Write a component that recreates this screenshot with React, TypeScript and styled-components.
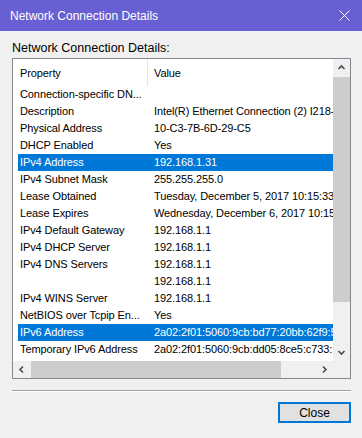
import styled, { createGlobalStyle } from "styled-components";

const GlobalStyle = createGlobalStyle`
  html, body {
    margin: 0;
    padding: 0;
    background: #f0f0f0;
  }
  * {
    box-sizing: border-box;
  }
`;

type Detail = {
  property: string;
  value: string;
  selected?: boolean;
};

const details: Detail[] = [
  { property: "Connection-specific DN...", value: "" },
  { property: "Description", value: "Intel(R) Ethernet Connection (2) I218-V" },
  { property: "Physical Address", value: "10-C3-7B-6D-29-C5" },
  { property: "DHCP Enabled", value: "Yes" },
  { property: "IPv4 Address", value: "192.168.1.31", selected: true },
  { property: "IPv4 Subnet Mask", value: "255.255.255.0" },
  { property: "Lease Obtained", value: "Tuesday, December 5, 2017 10:15:33 AM" },
  { property: "Lease Expires", value: "Wednesday, December 6, 2017 10:15:33 AM" },
  { property: "IPv4 Default Gateway", value: "192.168.1.1" },
  { property: "IPv4 DHCP Server", value: "192.168.1.1" },
  { property: "IPv4 DNS Servers", value: "192.168.1.1" },
  { property: "", value: "192.168.1.1" },
  { property: "IPv4 WINS Server", value: "192.168.1.1" },
  { property: "NetBIOS over Tcpip En...", value: "Yes" },
  { property: "IPv6 Address", value: "2a02:2f01:5060:9cb:bd77:20bb:62f9:5fc1", selected: true },
  { property: "Temporary IPv6 Address", value: "2a02:2f01:5060:9cb:dd05:8ce5:c733:1a2b" },
  { property: "Link-local IPv6 Address", value: "fe80::b477:86bb:62f9:5fc1%5" },
];

const Window = styled.div`
  width: 362px;
  height: 438px;
  display: flex;
  flex-direction: column;
  background: #f0f0f0;
  font-family: "Liberation Sans", Arial, sans-serif;
  color: #000;
  overflow: hidden;
`;

const TitleBar = styled.div`
  height: 31px;
  flex: none;
  display: flex;
  align-items: center;
  justify-content: space-between;
  padding: 0 12px 0 10px;
  background: #6860d2;
  color: #fff;
  font-size: 12px;
`;

const Body = styled.div`
  flex: 1;
  display: flex;
  flex-direction: column;
  padding: 10px 11px 0 12px;
`;

const Label = styled.div`
  font-size: 12.5px;
  line-height: 15px;
  margin-bottom: 2px;
`;

const ListView = styled.div`
  height: 321px;
  border: 1px solid #828790;
  background: #fff;
  display: grid;
  grid-template-columns: 1fr 17px;
  grid-template-rows: 1fr 17px;
`;

const Viewport = styled.div`
  overflow: hidden;
  padding-left: 5px;
  font-size: 11px;
  letter-spacing: -0.1px;
`;

const Header = styled.div`
  height: 27px;
  display: flex;
  align-items: stretch;
  white-space: nowrap;
`;

const HeaderCell = styled.div<{ $width?: number }>`
  display: flex;
  align-items: center;
  flex: none;
  width: ${(p) => (p.$width ? `${p.$width}px` : "auto")};
  padding-left: ${(p) => (p.$width ? "2px" : "6px")};
  border-right: ${(p) => (p.$width ? "1px solid #e5e5e5" : "none")};
`;

const Row = styled.div<{ $selected?: boolean }>`
  height: 17px;
  line-height: 17px;
  display: flex;
  width: 400px;
  white-space: nowrap;
  background: ${(p) => (p.$selected ? "#0078d7" : "transparent")};
  color: ${(p) => (p.$selected ? "#fff" : "#000")};
`;

const PropertyCell = styled.div`
  width: 130px;
  flex: none;
  padding-left: 2px;
  overflow: hidden;
`;

const ValueCell = styled.div`
  flex: 1;
  padding-left: 6px;
  overflow: hidden;
`;

const VScroll = styled.div`
  background: #f0f0f0;
  display: flex;
  flex-direction: column;
`;

const HScroll = styled.div`
  background: #f0f0f0;
  display: flex;
`;

const Corner = styled.div`
  background: #f0f0f0;
`;

const ArrowBox = styled.div`
  width: 17px;
  height: 17px;
  flex: none;
  display: flex;
  align-items: center;
  justify-content: center;
`;

const Track = styled.div<{ $vertical?: boolean }>`
  flex: 1;
  display: flex;
  flex-direction: ${(p) => (p.$vertical ? "column" : "row")};
  padding: ${(p) => (p.$vertical ? "1px 0 0 0" : "0 0 0 1px")};
`;

const Thumb = styled.div<{ $vertical?: boolean; $size: number }>`
  flex: none;
  background: #cdcdcd;
  ${(p) => (p.$vertical ? `height: ${p.$size}px;` : `width: ${p.$size}px;`)}
`;

const Separator = styled.div`
  margin-top: 11px;
  height: 2px;
  border-top: 1px solid #a0a0a0;
  border-bottom: 1px solid #fff;
`;

const Footer = styled.div`
  display: flex;
  justify-content: flex-end;
  margin-top: 10px;
`;

const Button = styled.button`
  width: 73px;
  height: 21px;
  padding: 0;
  border: 2px solid #0078d7;
  background: #e1e1e1;
  font-family: "Liberation Sans", Arial, sans-serif;
  font-size: 12px;
  color: #000;
`;

const Chevron = ({ dir }: { dir: "up" | "down" | "left" | "right" }) => {
  const rot = { up: 0, right: 90, down: 180, left: 270 }[dir];
  return (
    <svg width="9" height="9" viewBox="0 0 9 9">
      <polyline
        points="1.5,6 4.5,3 7.5,6"
        fill="none"
        stroke="#4a4a4a"
        strokeWidth="1.6"
        transform={`rotate(${rot} 4.5 4.5)`}
      />
    </svg>
  );
};

const CloseIcon = () => (
  <svg width="11" height="11" viewBox="0 0 11 11">
    <path d="M0.5 0.5 L10.5 10.5 M10.5 0.5 L0.5 10.5" stroke="#fff" strokeWidth="1" />
  </svg>
);

const App = () => {
  return (
    <>
      <GlobalStyle />
      <Window>
        <TitleBar>
          <span>Network Connection Details</span>
          <CloseIcon />
        </TitleBar>
        <Body>
          <Label>Network Connection Details:</Label>
          <ListView>
            <Viewport>
              <Header>
                <HeaderCell $width={130}>Property</HeaderCell>
                <HeaderCell>Value</HeaderCell>
              </Header>
              {details.map((d, i) => (
                <Row key={i} $selected={d.selected}>
                  <PropertyCell>{d.property}</PropertyCell>
                  <ValueCell>{d.value}</ValueCell>
                </Row>
              ))}
            </Viewport>
            <VScroll>
              <ArrowBox>
                <Chevron dir="up" />
              </ArrowBox>
              <Track $vertical>
                <Thumb $vertical $size={225} />
              </Track>
              <ArrowBox>
                <Chevron dir="down" />
              </ArrowBox>
            </VScroll>
            <HScroll>
              <ArrowBox>
                <Chevron dir="left" />
              </ArrowBox>
              <Track>
                <Thumb $size={250} />
              </Track>
              <ArrowBox>
                <Chevron dir="right" />
              </ArrowBox>
            </HScroll>
            <Corner />
          </ListView>
          <Separator />
          <Footer>
            <Button>Close</Button>
          </Footer>
        </Body>
      </Window>
    </>
  );
};

export default App;
